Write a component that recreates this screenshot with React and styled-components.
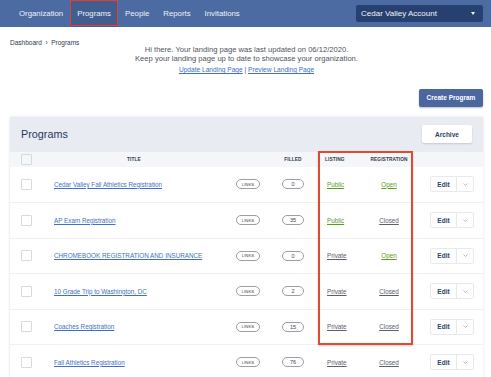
import React from 'react';
import styled, { createGlobalStyle } from 'styled-components';

const GlobalStyle = createGlobalStyle`
  html, body {
    margin: 0;
    padding: 0;
    background: #ffffff;
    font-family: "Liberation Sans", Arial, sans-serif;
    -webkit-font-smoothing: antialiased;
  }
`;

const Page = styled.div`
  width: 491px;
  height: 377px;
  overflow: hidden;
  position: relative;
`;

const NavBar = styled.nav`
  height: 27px;
  background: #4c6ba2;
  display: flex;
  align-items: center;
  justify-content: space-between;
  padding: 0 8px 0 12px;
`;

const NavLinks = styled.div`
  display: flex;
  align-items: stretch;
  height: 27px;
`;

const NavItem = styled.a`
  display: flex;
  align-items: center;
  padding: 0 7px;
  font-size: 7.8px;
  color: #eef2f9;
  position: relative;
  background: ${(p) => (p.active ? '#425e91' : 'transparent')};
`;

const Highlight = styled.span`
  position: absolute;
  left: 0;
  right: 0;
  top: 0;
  bottom: 1px;
  border: 1.5px solid #e0412e;
`;

const Account = styled.div`
  width: 127px;
  height: 17px;
  background: #26406f;
  border-radius: 2px;
  display: flex;
  align-items: center;
  justify-content: space-between;
  padding: 0 8px 0 5px;
  box-sizing: border-box;
  color: #f1f4fa;
  font-size: 8px;
`;

const Caret = styled.span`
  width: 0;
  height: 0;
  border-left: 2px solid transparent;
  border-right: 2px solid transparent;
  border-top: 3px solid #f1f4fa;
`;

const Breadcrumb = styled.div`
  padding: 12px 0 0 10px;
  font-size: 6.5px;
  color: #2d3a52;
  height: 8px;
  line-height: 8px;
`;

const Notice = styled.div`
  text-align: center;
  color: #4d535c;
  font-size: 7.6px;
  line-height: 8.5px;
  margin-top: -1px;
  padding-left: 2px;
`;

const NoticeLinks = styled.div`
  margin-top: 3px;
  font-size: 6.6px;
  color: #555;
`;

const TextLink = styled.a`
  color: ${(p) => p.color || '#3d6ec9'};
  text-decoration: underline;
`;

const ActionBar = styled.div`
  display: flex;
  justify-content: flex-end;
  padding: 14px 8px 0 0;
  height: 18px;
`;

const PrimaryButton = styled.button`
  width: 64px;
  height: 18px;
  background: #4a67a0;
  border: none;
  border-radius: 2px;
  color: #ffffff;
  font-family: inherit;
  font-size: 6.5px;
  font-weight: bold;
  padding: 0;
  box-shadow: 0 1px 2px rgba(0, 0, 0, 0.25);
`;

const Panel = styled.section`
  margin: 10px 8px 0 10px;
  background: #ffffff;
  box-shadow: 0 0 3px rgba(0, 0, 0, 0.12);
  position: relative;
`;

const PanelHead = styled.div`
  height: 35px;
  background: #e8ecf2;
  display: flex;
  align-items: center;
  justify-content: space-between;
  padding: 0 11px 0 11px;
`;

const PanelTitle = styled.h2`
  margin: 0;
  font-size: 10.8px;
  font-weight: normal;
  color: #27395a;
`;

const WhiteButton = styled.button`
  width: 50px;
  height: 18px;
  background: #ffffff;
  border: none;
  border-radius: 2px;
  box-shadow: 0 1px 2px rgba(0, 0, 0, 0.15);
  color: #2b3f66;
  font-family: inherit;
  font-weight: bold;
  font-size: 6.5px;
  padding: 0;
`;

const columns = '32px 184px 44px 46px 42px 62px 63px';

const HeadRow = styled.div`
  display: grid;
  grid-template-columns: ${columns};
  height: 15px;
  align-items: center;
  background: #f4f6f9;
  font-size: 4.8px;
  font-weight: bold;
  color: #333a44;
  text-transform: uppercase;
  letter-spacing: 0.1px;
`;

const Row = styled.div`
  display: grid;
  grid-template-columns: ${columns};
  height: 35.5px;
  align-items: center;
  border-top: ${(p) => (p.first ? 'none' : '1px solid #eef0f3')};
  box-sizing: border-box;
`;

const Cell = styled.div`
  padding-left: ${(p) => p.pad || 0}px;
  display: flex;
  justify-content: ${(p) => (p.align === 'center' ? 'center' : 'flex-start')};
`;

const Check = styled.span`
  width: 9px;
  height: 9px;
  border: 1px solid #d6d9de;
  border-radius: 1px;
  margin-left: 11px;
`;

const TitleLink = styled.a`
  color: #3f6fc6;
  text-decoration: underline;
  font-size: 6.3px;
  white-space: nowrap;
`;

const Pill = styled.span`
  width: ${(p) => p.w}px;
  height: 10px;
  border: 1px solid #9a9ea5;
  border-radius: 6px;
  box-sizing: border-box;
  display: flex;
  align-items: center;
  justify-content: center;
  font-size: ${(p) => p.fs}px;
  color: #444;
`;

const Status = styled.a`
  font-size: 6.3px;
  text-decoration: underline;
  color: ${(p) => (p.on ? '#5d9a1e' : '#5c6068')};
`;

const EditGroup = styled.div`
  display: flex;
  margin-left: 10px;
  height: 16px;
  border: 1px solid #e6e9ee;
  border-radius: 2px;
  box-sizing: border-box;
`;

const EditButton = styled.span`
  width: 25px;
  display: flex;
  align-items: center;
  justify-content: center;
  font-size: 6.5px;
  font-weight: bold;
  color: #2b3f66;
  border-right: 1px solid #e6e9ee;
`;

const MoreButton = styled.span`
  width: 16px;
  display: flex;
  align-items: center;
  justify-content: center;
`;

const Callout = styled.div`
  position: absolute;
  left: 308px;
  top: 34px;
  width: 95px;
  height: 194px;
  border: 2px solid #e04a32;
  box-sizing: border-box;
  box-shadow: 0 1px 2px rgba(0, 0, 0, 0.2);
  pointer-events: none;
`;

const programs = [
  { title: 'Cedar Valley Fall Athletics Registration', filled: 0, listing: 'Public', reg: 'Open' },
  { title: 'AP Exam Registration', filled: 35, listing: 'Public', reg: 'Closed' },
  { title: 'CHROMEBOOK REGISTRATION AND INSURANCE', filled: 0, listing: 'Private', reg: 'Open' },
  { title: '10 Grade Trip to Washington, DC', filled: 2, listing: 'Private', reg: 'Closed' },
  { title: 'Coaches Registration', filled: 15, listing: 'Private', reg: 'Closed' },
  { title: 'Fall Athletics Registration', filled: 76, listing: 'Private', reg: 'Closed' },
];

const navItems = ['Organization', 'Programs', 'People', 'Reports', 'Invitations'];

const App = () => (
  <Page>
    <GlobalStyle />
    <NavBar>
      <NavLinks>
        {navItems.map((item) => (
          <NavItem key={item} active={item === 'Programs'}>
            {item}
            {item === 'Programs' && <Highlight />}
          </NavItem>
        ))}
      </NavLinks>
      <Account>
        Cedar Valley Account
        <Caret />
      </Account>
    </NavBar>

    <Breadcrumb>Dashboard &nbsp;›&nbsp; Programs</Breadcrumb>

    <Notice>
      Hi there. Your landing page was last updated on 06/12/2020.
      <br />
      Keep your landing page up to date to showcase your organization.
      <NoticeLinks>
        <TextLink>Update Landing Page</TextLink> | <TextLink>Preview Landing Page</TextLink>
      </NoticeLinks>
    </Notice>

    <ActionBar>
      <PrimaryButton>Create Program</PrimaryButton>
    </ActionBar>

    <Panel>
      <PanelHead>
        <PanelTitle>Programs</PanelTitle>
        <WhiteButton>Archive</WhiteButton>
      </PanelHead>
      <HeadRow>
        <Cell><Check /></Cell>
        <Cell align="center">Title</Cell>
        <Cell />
        <Cell align="center">Filled</Cell>
        <Cell pad={9}>Listing</Cell>
        <Cell align="center">Registration</Cell>
        <Cell />
      </HeadRow>
      {programs.map((p, i) => (
        <Row key={p.title} first={i === 0}>
          <Cell><Check /></Cell>
          <Cell pad={12}><TitleLink>{p.title}</TitleLink></Cell>
          <Cell align="center"><Pill w={24} fs={4.3}>LINKS</Pill></Cell>
          <Cell align="center"><Pill w={22} fs={5.5}>{p.filled}</Pill></Cell>
          <Cell pad={11}><Status on={p.listing === 'Public'}>{p.listing}</Status></Cell>
          <Cell align="center"><Status on={p.reg === 'Open'}>{p.reg}</Status></Cell>
          <Cell>
            <EditGroup>
              <EditButton>Edit</EditButton>
              <MoreButton>
                <svg width="5" height="3" viewBox="0 0 5 3">
                  <path d="M0.5 0.5 L2.5 2.5 L4.5 0.5" fill="none" stroke="#9aa0a8" strokeWidth="0.7" />
                </svg>
              </MoreButton>
            </EditGroup>
          </Cell>
        </Row>
      ))}
      <Callout />
    </Panel>
  </Page>
);

export default App;
